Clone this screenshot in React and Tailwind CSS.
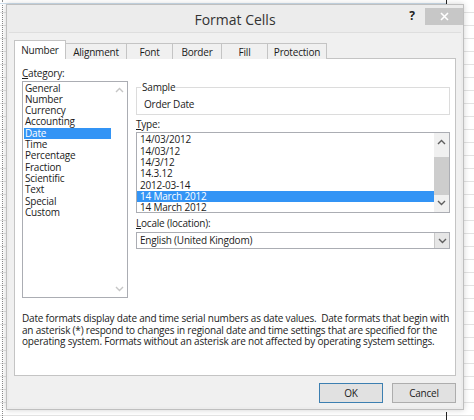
import React from 'react';

const Chevron = ({ up, color = '#5f5f5f' }) => (
  <svg width="9" height="6" viewBox="0 0 9 6" className="block">
    <polyline
      points={up ? '1,5 4.5,1.5 8,5' : '1,1 4.5,4.5 8,1'}
      fill="none"
      stroke={color}
      strokeWidth="1.4"
    />
  </svg>
);

const tabs = [
  { name: 'Number', w: 'w-[52px]' },
  { name: 'Alignment', w: 'w-[61px]' },
  { name: 'Font', w: 'w-[46px]' },
  { name: 'Border', w: 'w-[49px]' },
  { name: 'Fill', w: 'w-[46px]' },
  { name: 'Protection', w: 'w-[59px]' },
];

const categories = ['General', 'Number', 'Currency', 'Accounting', 'Date', 'Time', 'Percentage', 'Fraction', 'Scientific', 'Text', 'Special', 'Custom'];
const types = ['14/03/2012', '14/03/12', '14/3/12', '14.3.12', '2012-03-14', '14 March 2012', '14 March 2012'];

export default function App() {
  return (
    <div className="relative w-[474px] h-[420px] overflow-hidden bg-white bg-[repeating-linear-gradient(to_bottom,transparent_0px,transparent_12px,#e3e3e3_12px,#e3e3e3_13px)] pt-[4px] pl-[6px] font-['Open_Sans','Noto_Sans',sans-serif] text-[#1b1b1b]">
      {/* sheet bits behind the dialog */}
      <div className="absolute left-[2px] top-0 h-full w-px border-l border-dotted border-[#8a8a8a]" />
      <div className="absolute left-[446px] top-0 h-[6px] w-px bg-[#222]" />
      <div className="absolute left-[446px] bottom-0 h-[8px] w-px bg-[#222]" />
      <div className="absolute left-0 top-[3px] h-px w-[446px] bg-[#cfe0ee]" />

      {/* dialog */}
      <div className="relative w-[458px] h-[406px] flex flex-col bg-[#ececec] border border-[#bfbfbf] shadow-[0_0_6px_rgba(0,0,0,0.18)]">
        {/* title bar */}
        <div className="h-[27px] grid grid-cols-[1fr_auto_1fr]">
          <div />
          <div className="pt-[6px] text-[14px] leading-[18px] text-[#333]">Format Cells</div>
          <div className="flex justify-end items-start">
            <span className="mt-[4px] mr-[10px] text-[12px] font-bold leading-[14px] text-[#222]">?</span>
            <div className="mt-[3px] w-[38px] h-[17px] bg-[#c7c7c7] flex items-center justify-center">
              <svg width="9" height="9" viewBox="0 0 9 9">
                <path d="M1 1 L8 8 M8 1 L1 8" stroke="#fff" strokeWidth="1.6" />
              </svg>
            </div>
          </div>
        </div>

        {/* client area */}
        <div className="flex-1 mx-[2px] mb-[2px] bg-[#f0f0f0] border-t border-[#dedede] flex flex-col pt-[7px] pl-[5px] pr-[5px] text-[10px] leading-[12px] tracking-[-0.2px]">
          {/* tabs */}
          <div className="flex items-end h-[19px] -mb-px relative z-10">
            {tabs.map((t, i) =>
              i === 0 ? (
                <div key={t.name} className={`${t.w} h-[19px] bg-white border border-b-0 border-[#c4c4c4] flex items-center justify-center pb-[1px]`}>
                  {t.name}
                </div>
              ) : (
                <div key={t.name} className={`${t.w} h-[16px] bg-[#f0f0f0] border border-l-0 border-b-0 border-[#c4c4c4] flex items-center justify-center`}>
                  {t.name}
                </div>
              )
            )}
          </div>

          {/* panel */}
          <div className="h-[318px] w-[442px] bg-white border border-[#c4c4c4] flex flex-col pl-[7px] pt-[8px]">
            <div className="flex gap-[8px]">
              {/* category */}
              <div className="flex flex-col w-[106px]">
                <div className="h-[12px]"><span className="underline">C</span>ategory:</div>
                <div className="mt-[2px] h-[217px] border border-[#abadb3] flex">
                  <div className="flex-1 pt-[0.5px] leading-[11.33px]">
                    {categories.map((c) => (
                      <div key={c} className={c === 'Date' ? 'ml-[1px] pl-[1px] h-[11.33px] bg-[#3394f5] text-white' : 'pl-[2px] h-[11.33px]'}>
                        {c}
                      </div>
                    ))}
                  </div>
                  <div className="w-[16px] flex flex-col items-center justify-between py-[5px]">
                    <Chevron up color="#c6c6c6" />
                    <Chevron color="#c6c6c6" />
                  </div>
                </div>
              </div>

              {/* right side */}
              <div className="flex flex-col w-[314px]">
                <div className="relative mt-[20px] h-[28px] border border-[#dcdcdc] pl-[7px] pt-[10px]">
                  <span className="absolute -top-[7px] left-[4px] px-[1px] bg-white">Sample</span>
                  Order Date
                </div>
                <div className="mt-[3px] h-[12px]"><span className="underline">T</span>ype:</div>
                <div className="mt-[2px] h-[81px] border border-[#abadb3] flex overflow-hidden">
                  <div className="flex-1 pt-[1.3px] leading-[11.33px]">
                    {types.map((t, i) => (
                      <div key={i} className={i === 5 ? 'pl-[3px] h-[11.33px] bg-[#3394f5] text-white' : 'pl-[3px] h-[11.33px]'}>
                        {t}
                      </div>
                    ))}
                  </div>
                  <div className="w-[15px] bg-[#f0f0f0] flex flex-col items-center pt-[6px]">
                    <Chevron up />
                    <div className="mt-[12px] w-[15px] h-[38px] bg-[#cdcdcd]" />
                    <div className="mt-[5px]"><Chevron /></div>
                  </div>
                </div>
                <div className="mt-[4px] h-[12px]"><span className="underline">L</span>ocale (location):</div>
                <div className="mt-[3px] h-[17px] border border-[#abadb3] flex">
                  <div className="flex-1 pl-[3px] leading-[15px]">English (United Kingdom)</div>
                  <div className="w-[15px] bg-[#e6e6e6] border-l border-[#c9c9c9] flex items-center justify-center">
                    <Chevron />
                  </div>
                </div>
              </div>
            </div>

            <div className="mt-[15px] leading-[11.5px] whitespace-nowrap">
              <div>Date formats display date and time serial numbers as date values.&nbsp; Date formats that begin with</div>
              <div>an asterisk (*) respond to changes in regional date and time settings that are specified for the</div>
              <div>operating system. Formats without an asterisk are not affected by operating system settings.</div>
            </div>
          </div>

          {/* buttons */}
          <div className="mt-[7px] flex justify-end gap-[9px]">
            <button className="w-[64px] h-[20px] bg-[#e1e1e1] border border-[#3c7fb1] text-[10px] leading-[12px]">OK</button>
            <button className="w-[64px] h-[20px] bg-[#e1e1e1] border border-[#adadad] text-[10px] leading-[12px]">Cancel</button>
          </div>
        </div>
      </div>
    </div>
  );
}
